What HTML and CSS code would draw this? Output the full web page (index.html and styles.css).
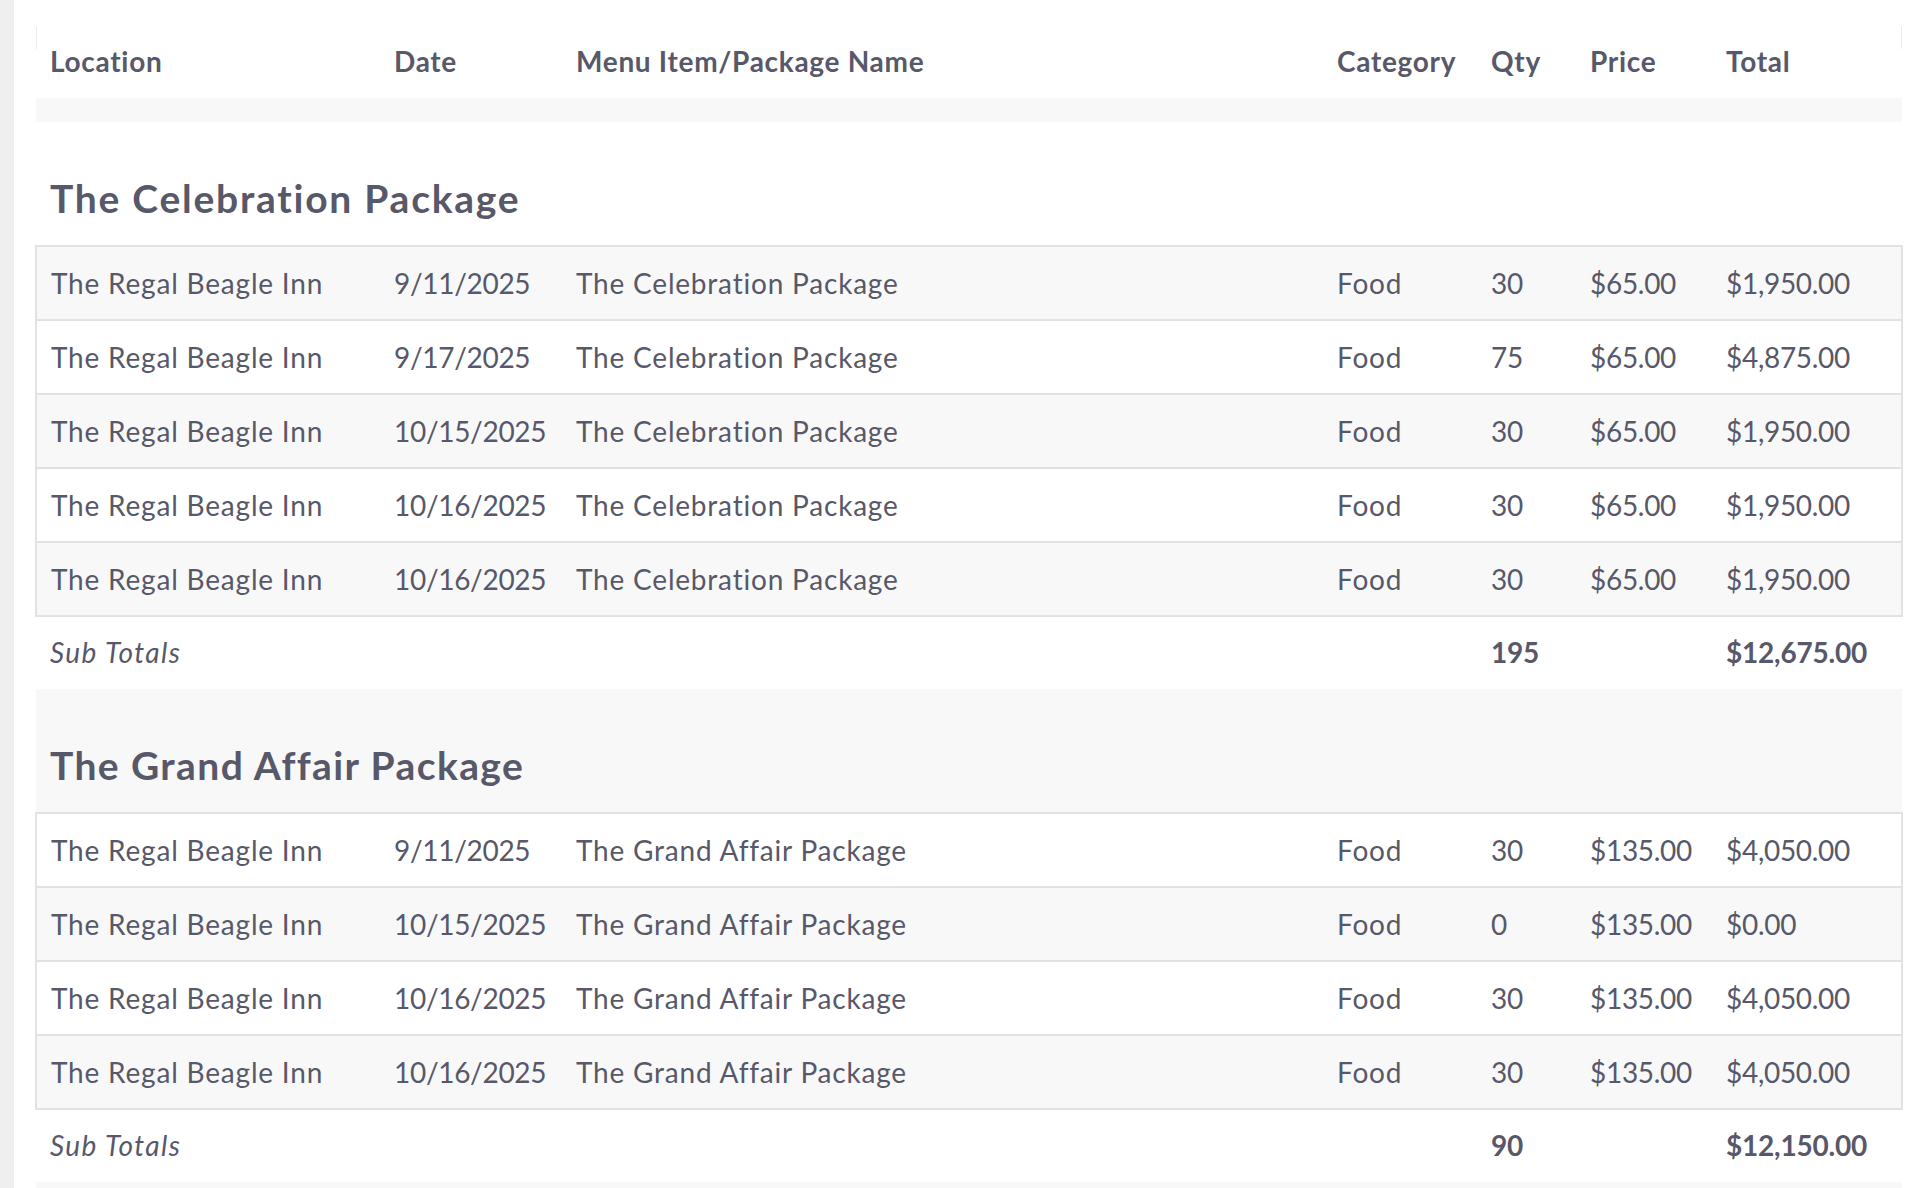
FILE: index.html
```html
<!DOCTYPE html>
<html lang="en">
<head>
<meta charset="utf-8">
<title>Package Report</title>
<link rel="stylesheet" href="styles.css">
</head>
<body>
<div class="strip"></div>
<main class="content">
  <table class="report">
    <colgroup>
      <col class="c-loc"><col class="c-date"><col class="c-menu"><col class="c-cat"><col class="c-qty"><col class="c-price"><col class="c-total">
    </colgroup>
    <thead>
      <tr class="head-row">
        <th>Location</th><th>Date</th><th>Menu Item/Package Name</th><th>Category</th><th>Qty</th><th>Price</th><th>Total</th>
      </tr>
    </thead>
    <tbody>
      <tr class="band"><td colspan="7"></td></tr>
      <tr class="group"><td colspan="7">The Celebration Package</td></tr>
      <tr class="item"><td>The Regal Beagle Inn</td><td class="n">9/11/2025</td><td>The Celebration Package</td><td>Food</td><td class="n">30</td><td class="n">$65.00</td><td class="n">$1,950.00</td></tr>
      <tr class="item"><td>The Regal Beagle Inn</td><td class="n">9/17/2025</td><td>The Celebration Package</td><td>Food</td><td class="n">75</td><td class="n">$65.00</td><td class="n">$4,875.00</td></tr>
      <tr class="item"><td>The Regal Beagle Inn</td><td class="n">10/15/2025</td><td>The Celebration Package</td><td>Food</td><td class="n">30</td><td class="n">$65.00</td><td class="n">$1,950.00</td></tr>
      <tr class="item"><td>The Regal Beagle Inn</td><td class="n">10/16/2025</td><td>The Celebration Package</td><td>Food</td><td class="n">30</td><td class="n">$65.00</td><td class="n">$1,950.00</td></tr>
      <tr class="item"><td>The Regal Beagle Inn</td><td class="n">10/16/2025</td><td>The Celebration Package</td><td>Food</td><td class="n">30</td><td class="n">$65.00</td><td class="n">$1,950.00</td></tr>
      <tr class="subtotal"><td class="label" colspan="4">Sub Totals</td><td class="num">195</td><td></td><td class="num">$12,675.00</td></tr>
      <tr class="group"><td colspan="7" class="grand">The Grand Affair Package</td></tr>
      <tr class="item"><td>The Regal Beagle Inn</td><td class="n">9/11/2025</td><td>The Grand Affair Package</td><td>Food</td><td class="n">30</td><td class="n">$135.00</td><td class="n">$4,050.00</td></tr>
      <tr class="item"><td>The Regal Beagle Inn</td><td class="n">10/15/2025</td><td>The Grand Affair Package</td><td>Food</td><td class="n">0</td><td class="n">$135.00</td><td class="n">$0.00</td></tr>
      <tr class="item"><td>The Regal Beagle Inn</td><td class="n">10/16/2025</td><td>The Grand Affair Package</td><td>Food</td><td class="n">30</td><td class="n">$135.00</td><td class="n">$4,050.00</td></tr>
      <tr class="item"><td>The Regal Beagle Inn</td><td class="n">10/16/2025</td><td>The Grand Affair Package</td><td>Food</td><td class="n">30</td><td class="n">$135.00</td><td class="n">$4,050.00</td></tr>
      <tr class="subtotal"><td class="label" colspan="4">Sub Totals</td><td class="num">90</td><td></td><td class="num">$12,150.00</td></tr>
      <tr class="tail"><td colspan="7"></td></tr>
    </tbody>
  </table>
</main>
</body>
</html>
```

FILE: styles.css
```css
html, body {
  margin: 0;
  padding: 0;
  background: #ffffff;
}

body {
  display: flex;
  height: 1188px;
  font-family: Lato, "Open Sans", "Liberation Sans", sans-serif;
  color: #575869;
  overflow: hidden;
}

.strip {
  width: 14px;
  flex: 0 0 14px;
  background: #efefef;
}

.content {
  flex: 1;
  padding: 20px 15px 0 21px;
}

.report {
  width: 100%;
  table-layout: fixed;
  border-collapse: collapse;
  font-size: 28px;
  letter-spacing: 0.8px;
}

.c-loc { width: 342px; }
.c-date { width: 182px; }
.c-menu { width: 761px; }
.c-cat { width: 154px; }
.c-qty { width: 99px; }
.c-price { width: 136px; }
.c-total { width: auto; }

.report th,
.report td {
  padding: 0 0 0 16px;
  text-align: left;
  white-space: nowrap;
}

.report th:first-child,
.report td:first-child {
  padding-left: 14px;
}

.head-row th {
  height: 74px;
  padding-top: 4px;
  font-weight: 700;
  letter-spacing: 0.7px;
  vertical-align: middle;
  position: relative;
}

.head-row th:first-child::before,
.head-row th:last-child::after {
  content: "";
  position: absolute;
  top: 6px;
  width: 1px;
  height: 23px;
  background: #ececef;
}

.head-row th:first-child::before { left: 0; }
.head-row th:last-child::after { right: 0; }

.band td {
  height: 24px;
  padding: 0;
}

.tail td {
  height: 6px;
  padding: 0;
}

.report tbody tr:nth-child(odd) {
  background: #f8f8f8;
}

.group td {
  height: 124px;
  vertical-align: bottom;
  padding-bottom: 24px;
  box-sizing: border-box;
  font-size: 39px;
  font-weight: 700;
  letter-spacing: 1.75px;
}

.group td.grand {
  letter-spacing: 1.4px;
}

.item td {
  height: 72px;
  vertical-align: middle;
  border-top: 2px solid #e2e2e6;
  border-bottom: 2px solid #e2e2e6;
}

.item td:first-child { border-left: 2px solid #e2e2e6; }
.item td:last-child { border-right: 2px solid #e2e2e6; }

.item .n {
  letter-spacing: -0.3px;
}

.subtotal td {
  height: 73px;
  vertical-align: middle;
  padding-bottom: 3px;
  box-sizing: border-box;
}

.subtotal .label {
  font-style: italic;
  letter-spacing: 1.4px;
}

.subtotal .num {
  font-weight: 700;
  letter-spacing: -0.2px;
}
```
